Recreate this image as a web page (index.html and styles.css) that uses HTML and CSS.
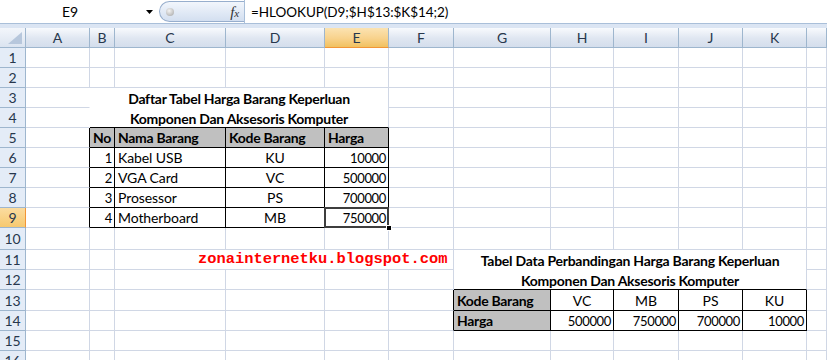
FILE: index.html
```html
<!DOCTYPE html>
<html>
<head>
<meta charset="utf-8">
<link rel="stylesheet" href="styles.css">
</head>
<body>
<div class="app">
  <div class="fwrap">
    <div class="fbar">
      <div class="namebox">
        <span class="ref">E9</span>
        <svg class="drop" width="7" height="4" viewBox="0 0 7 4"><polygon points="0,0 7,0 3.5,4" fill="#000"/></svg>
      </div>
      <div class="pill">
        <span class="knob"></span>
        <span class="fx">f<span class="x">x</span></span>
      </div>
      <div class="formula">=HLOOKUP(D9;$H$13:$K$14;2)</div>
    </div>
  </div>
  <div class="sheet">
    <!-- header row -->
    <div class="c corner"><svg width="14" height="12" viewBox="0 0 14 12"><polygon points="14,0 14,12 0,12" fill="#b7c7dc"/></svg></div>
    <div class="c ch">A</div><div class="c ch">B</div><div class="c ch">C</div><div class="c ch">D</div><div class="c ch sel">E</div><div class="c ch">F</div><div class="c ch">G</div><div class="c ch">H</div><div class="c ch">I</div><div class="c ch">J</div><div class="c ch">K</div><div class="c ch"></div>

    <!-- row 1 -->
    <div class="c rh">1</div><div class="c"></div><div class="c"></div><div class="c"></div><div class="c"></div><div class="c"></div><div class="c"></div><div class="c"></div><div class="c"></div><div class="c"></div><div class="c"></div><div class="c"></div><div class="c"></div>
    <!-- row 2 -->
    <div class="c rh">2</div><div class="c"></div><div class="c"></div><div class="c"></div><div class="c"></div><div class="c"></div><div class="c"></div><div class="c"></div><div class="c"></div><div class="c"></div><div class="c"></div><div class="c"></div><div class="c"></div>
    <!-- row 3 -->
    <div class="c rh">3</div><div class="c nor"></div>
    <div class="c title t1 bb"><div class="tl">Daftar Tabel Harga Barang Keperluan</div><div class="tl">Komponen Dan Aksesoris Komputer</div></div>
    <div class="c"></div><div class="c"></div><div class="c"></div><div class="c"></div><div class="c"></div><div class="c"></div><div class="c"></div>
    <!-- row 4 -->
    <div class="c rh">4</div><div class="c nor"></div>
    <div class="c"></div><div class="c"></div><div class="c"></div><div class="c"></div><div class="c"></div><div class="c"></div><div class="c"></div>
    <!-- row 5 -->
    <div class="c rh">5</div><div class="c rb"></div>
    <div class="c t th">No</div><div class="c t th">Nama Barang</div><div class="c t th">Kode Barang</div><div class="c t th">Harga</div>
    <div class="c"></div><div class="c"></div><div class="c"></div><div class="c"></div><div class="c"></div><div class="c"></div><div class="c"></div>
    <!-- row 6 -->
    <div class="c rh">6</div><div class="c rb"></div>
    <div class="c t r n">1</div><div class="c t">Kabel USB</div><div class="c t ctr">KU</div><div class="c t r n">10000</div>
    <div class="c"></div><div class="c"></div><div class="c"></div><div class="c"></div><div class="c"></div><div class="c"></div><div class="c"></div>
    <!-- row 7 -->
    <div class="c rh">7</div><div class="c rb"></div>
    <div class="c t r n">2</div><div class="c t">VGA Card</div><div class="c t ctr">VC</div><div class="c t r n">500000</div>
    <div class="c"></div><div class="c"></div><div class="c"></div><div class="c"></div><div class="c"></div><div class="c"></div><div class="c"></div>
    <!-- row 8 -->
    <div class="c rh">8</div><div class="c rb"></div>
    <div class="c t r n">3</div><div class="c t">Prosessor</div><div class="c t ctr">PS</div><div class="c t r n">700000</div>
    <div class="c"></div><div class="c"></div><div class="c"></div><div class="c"></div><div class="c"></div><div class="c"></div><div class="c"></div>
    <!-- row 9 -->
    <div class="c rh sel">9</div><div class="c rb"></div>
    <div class="c t r n">4</div><div class="c t">Motherboard</div><div class="c t ctr">MB</div><div class="c t r n active">750000<span class="handle"></span></div>
    <div class="c"></div><div class="c"></div><div class="c"></div><div class="c"></div><div class="c"></div><div class="c"></div><div class="c"></div>
    <!-- row 10 -->
    <div class="c rh">10</div><div class="c"></div><div class="c"></div><div class="c"></div><div class="c"></div><div class="c"></div><div class="c"></div><div class="c"></div><div class="c"></div><div class="c"></div><div class="c"></div><div class="c"></div><div class="c"></div>
    <!-- row 11 -->
    <div class="c rh">11</div><div class="c"></div><div class="c"></div>
    <div class="c wm">zonainternetku.blogspot.com</div>
    <div class="c title t2 bb"><div class="tl">Tabel Data Perbandingan Harga Barang Keperluan</div><div class="tl">Komponen Dan Aksesoris Komputer</div></div>
    <div class="c"></div>
    <!-- row 12 -->
    <div class="c rh">12</div><div class="c"></div><div class="c"></div><div class="c"></div><div class="c"></div><div class="c"></div><div class="c"></div>
    <div class="c"></div>
    <!-- row 13 -->
    <div class="c rh">13</div><div class="c"></div><div class="c"></div><div class="c"></div><div class="c"></div><div class="c"></div><div class="c rb"></div>
    <div class="c t th">Kode Barang</div><div class="c t ctr">VC</div><div class="c t ctr">MB</div><div class="c t ctr">PS</div><div class="c t ctr">KU</div>
    <div class="c"></div>
    <!-- row 14 -->
    <div class="c rh">14</div><div class="c"></div><div class="c"></div><div class="c"></div><div class="c"></div><div class="c"></div><div class="c rb"></div>
    <div class="c t th">Harga</div><div class="c t r n">500000</div><div class="c t r n">750000</div><div class="c t r n">700000</div><div class="c t r n">10000</div>
    <div class="c"></div>
    <!-- row 15 -->
    <div class="c rh">15</div><div class="c"></div><div class="c"></div><div class="c"></div><div class="c"></div><div class="c"></div><div class="c"></div><div class="c"></div><div class="c"></div><div class="c"></div><div class="c"></div><div class="c"></div><div class="c"></div>
    <!-- row 16 -->
    <div class="c rh">16</div><div class="c"></div><div class="c"></div><div class="c"></div><div class="c"></div><div class="c"></div><div class="c"></div><div class="c"></div><div class="c"></div><div class="c"></div><div class="c"></div><div class="c"></div><div class="c"></div>
  </div>
</div>
</body>
</html>
```
FILE: styles.css
```css
* { box-sizing: border-box; }
html, body { margin: 0; padding: 0; background: #fff; }
body {
  font-family: Lato, "Liberation Sans", sans-serif;
  font-size: 14px;
  letter-spacing: -0.1px;
  color: #000;
}
.app { width: 827px; height: 360px; overflow: hidden; }

/* formula bar */
.fwrap {
  height: 28px;
  background: #dbe5f3;
  padding-bottom: 4px;
}
.fbar {
  display: flex;
  height: 24px;
  border-bottom: 1px solid #a9bfd9;
}
.namebox {
  width: 158px;
  background: #fff;
  display: flex;
  align-items: center;
  font-size: 14px;
}
.namebox .ref { width: 140px; text-align: center; }
.namebox .drop { margin-left: 6px; }
.pill {
  width: 86px;
  display: flex;
  align-items: center;
  background: #fff;
  padding: 2px 0 1px 1px;
  position: relative;
}
.pill .knob {
  width: 8px; height: 8px;
  border-radius: 50%;
  background: radial-gradient(circle at 40% 35%, #f4f4f4, #a3a3a3);
  margin-left: 7px;
  position: relative;
  z-index: 1;
}
.pill::after {
  content: "";
  position: absolute;
  left: 1px; top: 1px; right: 0; bottom: 1px;
  border: 1px solid #97aecd;
  border-right: none;
  border-radius: 11px 0 0 11px;
  background: linear-gradient(#f2f6fc, #d3dff0);
}
.pill .fx {
  margin-left: auto;
  margin-right: 5px;
  font-family: "Liberation Serif", serif;
  font-style: italic;
  font-size: 15px;
  color: #333;
  position: relative;
  z-index: 1;
}
.pill .fx .x { font-size: 11px; }
.formula {
  flex: 1;
  background: #fff;
  border-left: 1px solid #a9bfd9;
  display: flex;
  align-items: center;
  padding-left: 6px;
  font-size: 13.5px;
  letter-spacing: -0.05px;
}

/* sheet */
.sheet {
  display: grid;
  grid-template-columns: 26px 64px 25px 111px 99px 64px 65px 97px 63px 65px 64px 64px 1fr;
  grid-template-rows: 20px repeat(9, 20px) 22px 20px 20px 21px 20px 20px 20px;
}
.c {
  border-right: 1px solid #d0d7e5;
  border-bottom: 1px solid #d0d7e5;
  display: flex;
  align-items: flex-end;
  padding: 0 3px 1px 3px;
  white-space: nowrap;
  min-width: 0;
  background: #fff;
}
.ch {
  background: linear-gradient(#f8fafd, #dfe6f1 55%, #d4deec);
  border-right-color: #9eb6ce;
  border-bottom-color: #9eb6ce;
  justify-content: center;
  align-items: center;
  color: #27374d;
  padding: 0;
}
.ch.sel {
  background: linear-gradient(#fbe3b2, #f8d28c 55%, #f1c15f);
  border-bottom-color: #f29536;
}
.corner {
  background: linear-gradient(#f3f6fb, #dbe4f0);
  border-right-color: #9eb6ce;
  border-bottom-color: #9eb6ce;
  align-items: flex-end;
  justify-content: flex-end;
  padding: 0 3px 3px 0;
}
.rh {
  background: #e4ecf7;
  border-right-color: #9eb6ce;
  border-bottom-color: #9eb6ce;
  justify-content: center;
  align-items: center;
  color: #27374d;
  padding: 0;
}
.rh.sel {
  background: linear-gradient(#fbdca0, #f7c96f);
  border-right-color: #f29536;
}

.t { border-right-color: #000; border-bottom-color: #000; }
.th { background: #c0c0c0; font-weight: bold; letter-spacing: -0.3px; }
.rb { border-right-color: #000; }
.bb { border-bottom-color: #000; }
.nor { border-right-color: #fff; }
.r { justify-content: flex-end; padding-right: 2px; }
.ctr { justify-content: center; }
.n { font-size: 13px; letter-spacing: -0.35px; }

.title {
  flex-direction: column;
  align-items: center;
  justify-content: flex-start;
  font-weight: bold;
  letter-spacing: -0.25px;
  padding: 0;
}
.title .tl { height: 20px; line-height: 20px; padding-top: 1px; }
.t1 { grid-column: span 4; grid-row: span 2; }
.t2 { grid-column: span 5; grid-row: span 2; }

.wm {
  grid-column: span 4;
  font-family: "Liberation Mono", monospace;
  font-weight: bold;
  color: #ff0000;
  font-size: 15.4px;
  letter-spacing: 0;
  padding-left: 83px;
  padding-bottom: 2px;
  align-items: center;
}

.active { position: relative; }
.active::before {
  content: "";
  position: absolute;
  left: -1px; top: -1px; right: -1px; bottom: -1px;
  border: 2px solid #3e3e3e;
}
.handle {
  position: absolute;
  right: -4px; bottom: -4px;
  width: 6px; height: 6px;
  background: #000;
  border: 1px solid #fff;
  z-index: 2;
}
```
